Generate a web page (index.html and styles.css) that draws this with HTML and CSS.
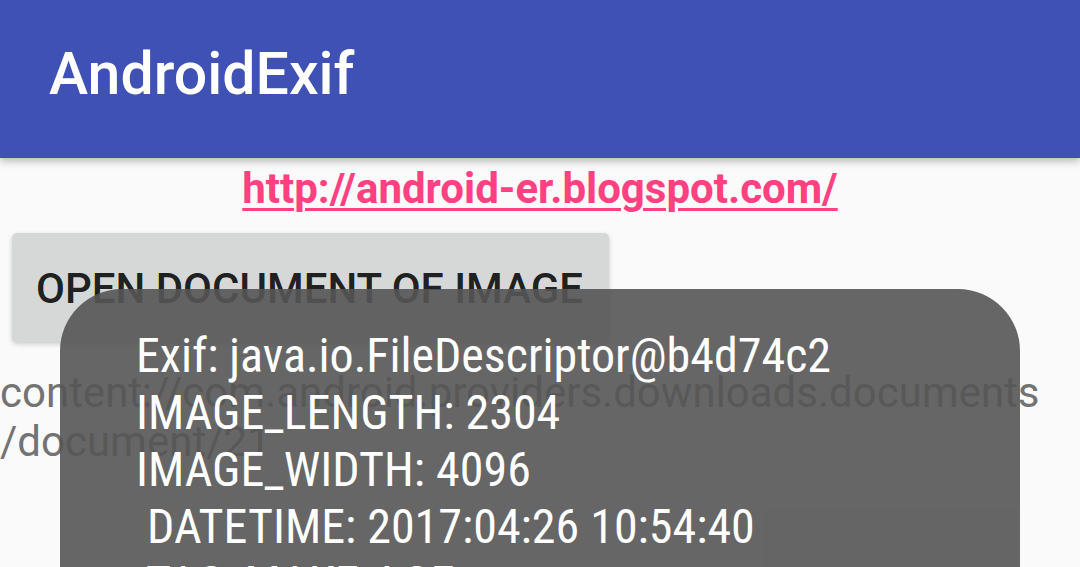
FILE: index.html
```html
<!DOCTYPE html>
<html>
<head>
<meta charset="utf-8">
<link rel="stylesheet" href="styles.css">
</head>
<body>
<div class="screen">
  <header class="appbar"><h1 class="title">AndroidExif</h1></header>
  <main class="content">
    <a class="link" href="#">http://android-er.blogspot.com/</a>
    <div class="btn-row"><button class="btn">OPEN DOCUMENT OF IMAGE</button></div>
    <p class="uri">content://com.android.providers.downloads.documents<br>/document/21</p>
  </main>
  <div class="toast">
    <div class="toast-line">Exif: java.io.FileDescriptor@b4d74c2</div>
    <div class="toast-line">IMAGE_LENGTH: 2304</div>
    <div class="toast-line">IMAGE_WIDTH: 4096</div>
    <div class="toast-line"> DATETIME: 2017:04:26 10:54:40</div>
    <div class="toast-line"> TAG_MAKE: LGE</div>
  </div>
</div>
</body>
</html>
```
FILE: styles.css
```css
html, body {
  margin: 0;
  padding: 0;
  background: #fafafa;
  font-family: Roboto, "Liberation Sans", sans-serif;
}
.screen {
  position: relative;
  width: 1080px;
  height: 567px;
  overflow: hidden;
  background: #fafafa;
}
.appbar {
  height: 158px;
  box-sizing: border-box;
  background: #3f51b5;
  box-shadow: 0 3px 8px rgba(0, 0, 0, 0.28);
  display: flex;
  align-items: center;
  padding: 0 0 12px 49px;
  position: relative;
  z-index: 1;
}
.title {
  margin: 0;
  color: #ffffff;
  font-size: 59px;
  font-weight: 500;
  line-height: 1;
}
.content {
  display: flex;
  flex-direction: column;
}
.link {
  display: block;
  text-align: center;
  margin-top: 6px;
  color: #ff4081;
  font-size: 42px;
  font-weight: 700;
  line-height: 49px;
  text-decoration: underline;
  text-decoration-thickness: 3px;
  text-underline-offset: 5px;
}
.btn-row {
  margin-top: 20px;
  padding-left: 12px;
}
.btn {
  display: block;
  width: 597px;
  height: 109px;
  border: none;
  border-radius: 5px;
  background: #d6d7d7;
  box-shadow: 0 2px 5px rgba(0, 0, 0, 0.2);
  font-family: Roboto, "Liberation Sans", sans-serif;
  font-size: 42px;
  font-weight: 500;
  color: rgba(0, 0, 0, 0.87);
  text-align: left;
  padding: 3px 0 0 24px;
  line-height: 1;
}
.uri {
  margin: 26px 0 0 0;
  color: #737373;
  font-size: 42px;
  line-height: 49px;
}
.toast {
  position: absolute;
  left: 60px;
  top: 289px;
  width: 960px;
  height: 400px;
  box-sizing: border-box;
  border-radius: 62px;
  background: rgba(85, 85, 85, 0.9);
  padding: 38px 0 0 76px;
  color: #ffffff;
  font-family: Roboto, "DejaVu Sans", sans-serif;
  font-stretch: 75%;
  font-size: 48px;
  line-height: 57px;
}
.toast-line {
  white-space: pre;
}
```
